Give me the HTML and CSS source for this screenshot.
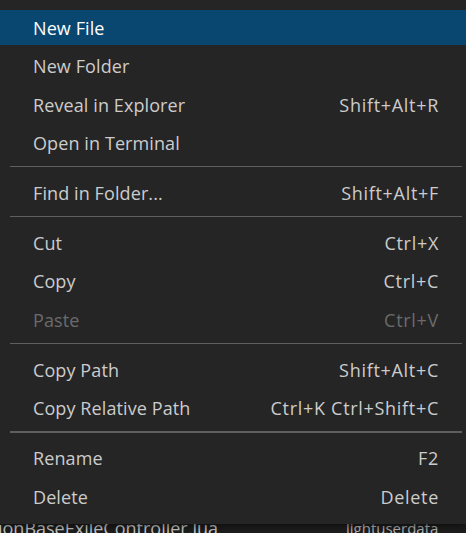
FILE: index.html
```html
<!DOCTYPE html>
<html>
<head>
<meta charset="utf-8">
<link rel="stylesheet" href="styles.css">
</head>
<body>
<div class="backdrop">
  <div class="bg-row">
    <span class="bg-name">ionBaseExileController.lua</span>
    <span class="bg-side">lightuserdata</span>
  </div>
</div>
<div class="menu">
  <div class="item active"><span class="label">New File</span><span class="key"></span></div>
  <div class="item"><span class="label">New Folder</span><span class="key"></span></div>
  <div class="item"><span class="label">Reveal in Explorer</span><span class="key">Shift+Alt+R</span></div>
  <div class="item"><span class="label">Open in Terminal</span><span class="key"></span></div>
  <div class="sep"></div>
  <div class="item"><span class="label">Find in Folder...</span><span class="key">Shift+Alt+F</span></div>
  <div class="sep"></div>
  <div class="item"><span class="label">Cut</span><span class="key">Ctrl+X</span></div>
  <div class="item"><span class="label">Copy</span><span class="key">Ctrl+C</span></div>
  <div class="item disabled"><span class="label">Paste</span><span class="key">Ctrl+V</span></div>
  <div class="sep"></div>
  <div class="item"><span class="label">Copy Path</span><span class="key">Shift+Alt+C</span></div>
  <div class="item"><span class="label">Copy Relative Path</span><span class="key">Ctrl+K Ctrl+Shift+C</span></div>
  <div class="sep"></div>
  <div class="item"><span class="label">Rename</span><span class="key">F2</span></div>
  <div class="item"><span class="label">Delete</span><span class="key">Delete</span></div>
</div>
</body>
</html>
```
FILE: styles.css
```css
html, body {
  margin: 0;
  padding: 0;
  width: 466px;
  height: 533px;
  overflow: hidden;
  background: #1e1e1e;
  font-family: "Open Sans", "Noto Sans", sans-serif;
}

.backdrop {
  height: 533px;
  display: flex;
  flex-direction: column;
  justify-content: flex-end;
}

.bg-row {
  display: flex;
  justify-content: space-between;
  align-items: center;
  height: 22px;
  margin-bottom: -6px;
  color: #cccccc;
  font-size: 18px;
}

.bg-name {
  margin-left: -2px;
}

.bg-side {
  width: 120px;
  color: #bbbbbb;
  font-size: 15px;
}

.menu {
  position: absolute;
  top: 0;
  left: 0;
  width: 466px;
  height: 524px;
  box-sizing: border-box;
  background: #252526;
  padding-top: 8.25px;
  display: flex;
  flex-direction: column;
  box-shadow: 0 2px 8px rgba(0, 0, 0, 0.6);
  color: #cccccc;
  font-size: 18px;
}

.item {
  flex: none;
  height: 35px;
  margin: 1.75px 0;
  display: flex;
  align-items: center;
  justify-content: space-between;
  padding: 0 27px 0 33px;
}

.label {
  letter-spacing: 0.1px;
}

.key {
  letter-spacing: 0.7px;
}

.item.active {
  background: #094771;
  color: #ffffff;
}

.item.disabled {
  color: #6b6b6b;
}

.sep {
  flex: none;
  height: 1.5px;
  background: #5f5f5f;
  margin: 3.6px 4px 6.3px 10px;
}
```
